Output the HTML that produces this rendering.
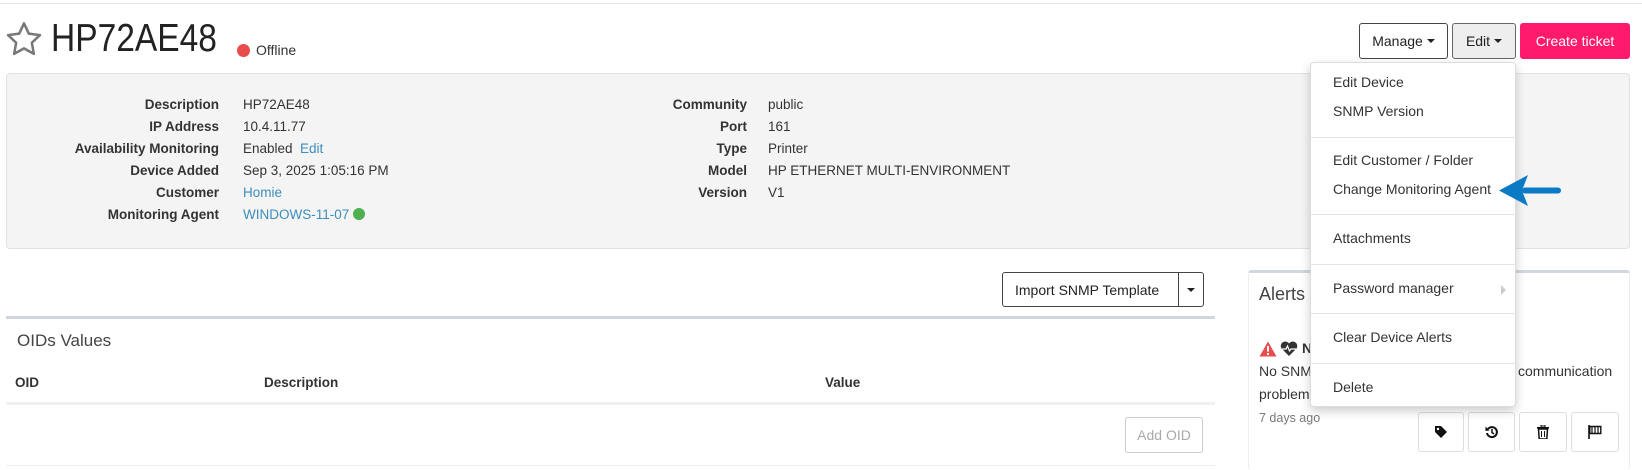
<!DOCTYPE html>
<html><head><meta charset="utf-8"><style>
*{box-sizing:border-box;margin:0;padding:0}
body{width:1642px;height:467px;position:relative;overflow:hidden;background:#fff;font-family:"Liberation Sans",sans-serif;color:#333;font-size:13.5px}
.a{position:absolute;white-space:nowrap}
.lbl{position:absolute;font-weight:bold;text-align:right;white-space:nowrap}
.val{position:absolute;white-space:nowrap}
.lnk{color:#3c8dbc}
.btn{position:absolute;border:1px solid #444;border-radius:3px;background:#fff;display:flex;align-items:center;justify-content:center;font-size:14px;color:#222}
.caret{display:inline-block;width:0;height:0;border-left:4px solid transparent;border-right:4px solid transparent;border-top:4px solid #222;margin-left:4px}
.dd{position:absolute;left:1310px;top:62px;width:206px;height:345px;background:#fff;border:1px solid #ddd;border-radius:4px;box-shadow:0 4px 10px rgba(0,0,0,.2)}
.di{position:absolute;left:22px;font-size:14px;color:#333;white-space:nowrap}
.dv{position:absolute;left:0;right:0;height:1px;background:#e5e5e5}
.ib{position:absolute;top:412px;height:40px;border:1px solid #ddd;border-radius:3px;background:#fff;display:flex;align-items:center;justify-content:center}
</style></head><body>
<div class="a" style="left:0;top:3px;width:1642px;height:1px;background:#e4e4e4"></div>
<svg class="a" style="left:5px;top:21px" width="38" height="36" viewBox="0 0 24 23"><path d="M12 1.5l3.1 6.6 7.1.9-5.2 4.9 1.3 7.1L12 17.5 5.7 21l1.3-7.1L1.8 9l7.1-.9z" fill="none" stroke="#777" stroke-width="1.6" stroke-linejoin="round"/></svg>
<div class="a" style="left:51px;top:17px;font-size:39px;color:#222;transform:scaleX(0.86);transform-origin:0 0">HP72AE48</div>
<div class="a" style="left:237px;top:44px;width:13px;height:13px;border-radius:50%;background:#e84c4c"></div>
<div class="a" style="left:256px;top:42px;font-size:14px">Offline</div>

<div class="btn" style="left:1359px;top:23px;width:89px;height:36px">Manage<span class="caret"></span></div>
<div class="btn" style="left:1452px;top:23px;width:64px;height:36px;background:#eee;border-color:#666">Edit<span class="caret"></span></div>
<div class="btn" style="left:1520px;top:23px;width:110px;height:36px;background:#ff1a6e;border-color:#ff1a6e;color:#fff">Create ticket</div>

<div class="a" style="left:6px;top:73px;width:1624px;height:176px;background:#f4f4f4;border:1px solid #e2e2e2;border-radius:4px"></div>
<div class="lbl" style="right:1423px;top:97px">Description</div><div class="val" style="left:243px;top:97px">HP72AE48</div>
<div class="lbl" style="right:1423px;top:119px">IP Address</div><div class="val" style="left:243px;top:119px">10.4.11.77</div>
<div class="lbl" style="right:1423px;top:141px">Availability Monitoring</div><div class="val" style="left:243px;top:141px">Enabled&nbsp; <span class="lnk">Edit</span></div>
<div class="lbl" style="right:1423px;top:163px">Device Added</div><div class="val" style="left:243px;top:163px">Sep 3, 2025 1:05:16 PM</div>
<div class="lbl" style="right:1423px;top:185px">Customer</div><div class="val lnk" style="left:243px;top:185px">Homie</div>
<div class="lbl" style="right:1423px;top:207px">Monitoring Agent</div><div class="val" style="left:243px;top:207px"><span class="lnk">WINDOWS-11-07</span> <span style="display:inline-block;width:12px;height:12px;border-radius:50%;background:#4caf50;vertical-align:-1px"></span></div>
<div class="lbl" style="right:895px;top:97px">Community</div><div class="val" style="left:768px;top:97px">public</div>
<div class="lbl" style="right:895px;top:119px">Port</div><div class="val" style="left:768px;top:119px">161</div>
<div class="lbl" style="right:895px;top:141px">Type</div><div class="val" style="left:768px;top:141px">Printer</div>
<div class="lbl" style="right:895px;top:163px">Model</div><div class="val" style="left:768px;top:163px">HP ETHERNET MULTI-ENVIRONMENT</div>
<div class="lbl" style="right:895px;top:185px">Version</div><div class="val" style="left:768px;top:185px">V1</div>

<div class="btn" style="left:1002px;top:272px;width:202px;height:35px;justify-content:flex-start"><span style="padding-left:12px;width:176px;border-right:1px solid #444;height:100%;display:flex;align-items:center">Import SNMP Template</span><span class="caret" style="margin-left:8px"></span></div>

<div class="a" style="left:6px;top:316px;width:1209px;height:150px;border-top:3px solid #d2d6de;border-bottom:1px solid #eee"></div>
<div class="a" style="left:17px;top:331px;font-size:17px;color:#444">OIDs Values</div>
<div class="a" style="left:15px;top:375px;font-weight:bold">OID</div>
<div class="a" style="left:264px;top:375px;font-weight:bold">Description</div>
<div class="a" style="left:825px;top:375px;font-weight:bold">Value</div>
<div class="a" style="left:6px;top:402px;width:1209px;height:3px;background:#f0f0f0"></div>
<div class="btn" style="left:1125px;top:417px;width:78px;height:36px;border-color:#ccc;color:#aaa">Add OID</div>

<div class="a" style="left:1248px;top:270px;width:382px;height:200px;border-top:3px solid #d2d6de;border-left:1px solid #eee;border-right:1px solid #eee;border-radius:3px"></div>
<div class="a" style="left:1259px;top:284px;font-size:18px;color:#444">Alerts</div>
<svg class="a" style="left:1259px;top:341px" width="18" height="16" viewBox="0 0 18 16"><path d="M9 0.5L17.5 15.5H0.5z" fill="#e84c4c"/><rect x="8" y="5" width="2" height="5.5" fill="#fff"/><rect x="8" y="12" width="2" height="2" fill="#fff"/></svg>
<svg class="a" style="left:1280px;top:341px" width="18" height="16" viewBox="0 0 18 16"><path d="M9 15L1.5 7.5A4.2 4.2 0 0 1 9 2.5a4.2 4.2 0 0 1 7.5 5z" fill="#333"/><path d="M2 8h4l1.5-3 2 5 1.5-2h5" stroke="#fff" stroke-width="1.2" fill="none"/></svg>
<div class="a" style="left:1302px;top:340px;font-weight:bold;font-size:14px">No SNMP</div>
<div class="a" style="left:1259px;top:363px;font-size:14px">No SNMP</div>
<div class="a" style="left:1518px;top:363px;font-size:14px">communication</div>
<div class="a" style="left:1259px;top:386px;font-size:14px">problem</div>
<div class="a" style="left:1259px;top:411px;font-size:12.5px;color:#777">7 days ago</div>
<div class="ib" style="left:1418px;width:46px"><svg width="14" height="14" viewBox="0 0 14 14"><path d="M1 1h6l6 6-6 6-6-6z" fill="#111"/><circle cx="4" cy="4" r="1.2" fill="#fff"/></svg></div>
<div class="ib" style="left:1468px;width:47px"><svg width="14" height="14" viewBox="0 0 14 14"><path d="M3 4A5 5 0 1 1 2 8" stroke="#111" stroke-width="2" fill="none"/><path d="M0.5 1.5L4.5 5.5 0.5 6z" fill="#111"/><path d="M7 4v3.5l2 1.5" stroke="#111" stroke-width="1.5" fill="none"/></svg></div>
<div class="ib" style="left:1519px;width:48px"><svg width="12" height="14" viewBox="0 0 12 14"><rect x="0" y="2" width="12" height="1.6" fill="#111"/><rect x="4" y="0" width="4" height="2" fill="none" stroke="#111"/><path d="M1.5 4h9l-.7 10H2.2z" fill="none" stroke="#111" stroke-width="1.5"/><path d="M4.5 6v6M7.5 6v6" stroke="#111"/></svg></div>
<div class="ib" style="left:1571px;width:48px"><svg width="14" height="14" viewBox="0 0 14 14"><path d="M1 0v14" stroke="#111" stroke-width="1.6"/><path d="M1.8 1.5h11v7h-11z" fill="none" stroke="#111" stroke-width="1.4"/><path d="M4 1.5v7M7 1.5v7M10 1.5v7" stroke="#111" stroke-width="1.2"/></svg></div>

<div class="dd">
<div class="di" style="top:11px">Edit Device</div>
<div class="di" style="top:40px">SNMP Version</div>
<div class="dv" style="top:74px"></div>
<div class="di" style="top:89px">Edit Customer / Folder</div>
<div class="di" style="top:118px">Change Monitoring Agent</div>
<div class="dv" style="top:151px"></div>
<div class="di" style="top:167px">Attachments</div>
<div class="dv" style="top:201px"></div>
<div class="di" style="top:217px">Password manager</div>
<div class="a" style="left:190px;top:222px;width:0;height:0;border-top:5px solid transparent;border-bottom:5px solid transparent;border-left:5px solid #ccc"></div>
<div class="dv" style="top:250px"></div>
<div class="di" style="top:266px">Clear Device Alerts</div>
<div class="dv" style="top:300px"></div>
<div class="di" style="top:316px">Delete</div>
</div>

<svg class="a" style="left:1495px;top:170px" width="70" height="40" viewBox="0 0 70 40"><path d="M63 20.5H30" stroke="#0a7ac4" stroke-width="6" stroke-linecap="round"/><path d="M4 20.5L33 5 27 20.5 33 36z" fill="#0a7ac4"/></svg>
</body></html>
